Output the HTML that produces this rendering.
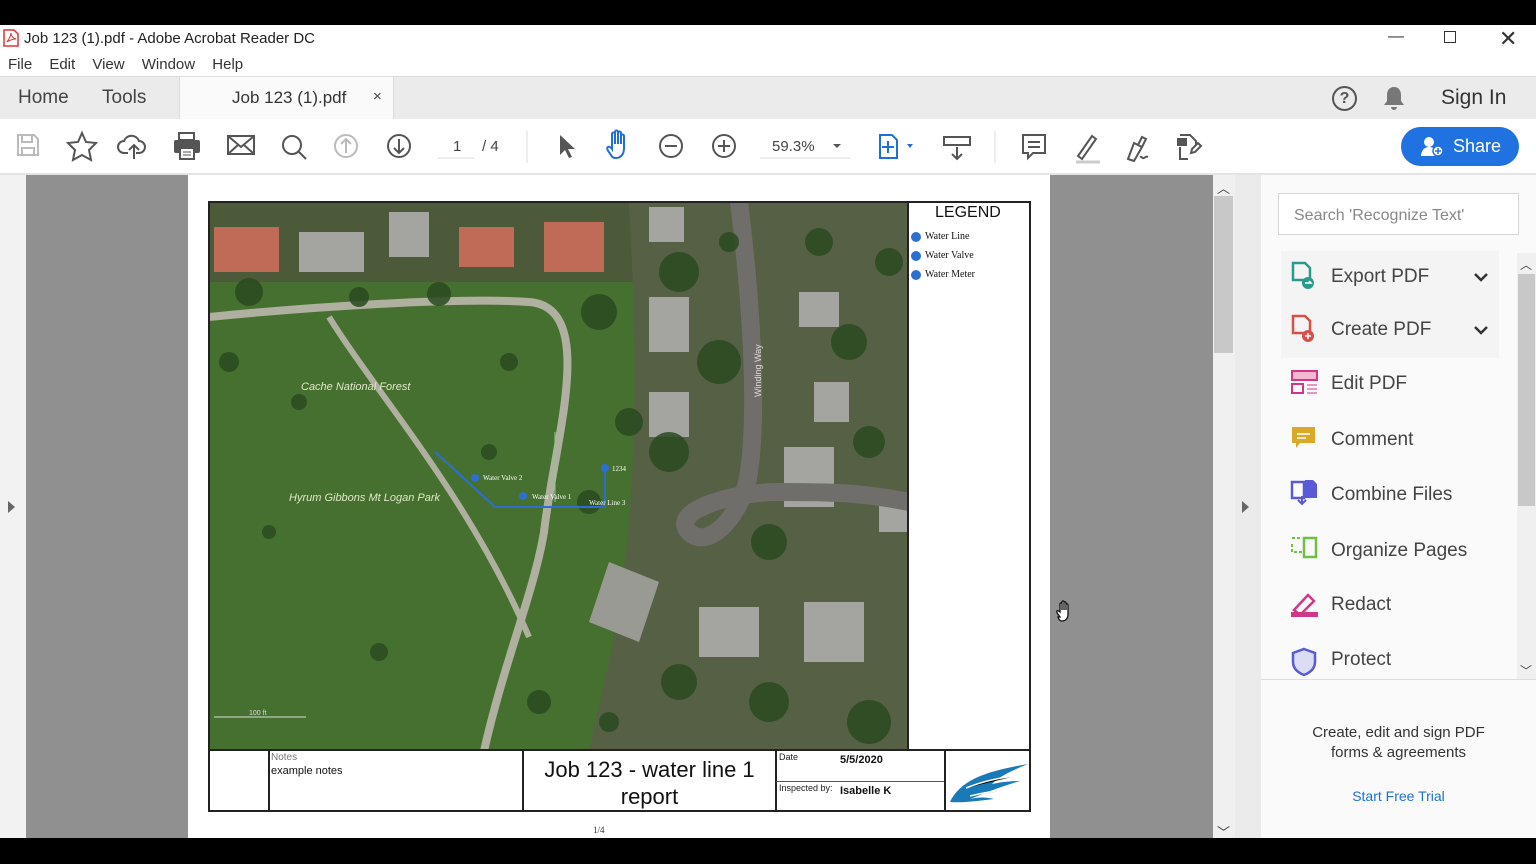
<!DOCTYPE html>
<html><head><meta charset="utf-8"><style>
*{margin:0;padding:0;box-sizing:border-box}
body{width:1536px;height:864px;overflow:hidden;background:#000;font-family:"Liberation Sans",sans-serif;position:relative;color:#333}
.a{position:absolute}
.rt{position:absolute;left:1331px;font-size:19px;color:#444}
</style></head><body>
<div class="a" style="left:0;top:25px;width:1536px;height:27px;background:#fff"></div>
<svg class="a" style="left:3px;top:29px" width="16" height="18"><path d="M1 1h10l4 4v12H1z" fill="#fff" stroke="#d33" stroke-width="1.5"/><path d="M4 13c2-3 4-7 4-9 0 3 2 5 5 6-3 0-6 1-9 3z" fill="none" stroke="#d33"/></svg>
<div class="a" style="left:24px;top:30px;font-size:15px;color:#222">Job 123 (1).pdf - Adobe Acrobat Reader DC</div>
<div class="a" style="left:1388px;top:28px;font-size:16px;color:#333">—</div>
<div class="a" style="left:1444px;top:31px;width:12px;height:12px;border:1.5px solid #333"></div>
<div class="a" style="left:1499px;top:26px;font-size:22px;color:#333">✕</div>
<div class="a" style="left:0;top:52px;width:1536px;height:24px;background:#fff"></div>
<div class="a" style="left:8px;top:56px;font-size:15px;color:#333;word-spacing:13px">File Edit View Window Help</div>
<div class="a" style="left:0;top:76px;width:1536px;height:43px;background:#ebebeb;border-top:1px solid #ddd"></div>
<div class="a" style="left:179px;top:77px;width:215px;height:43px;background:#fafafa;border-left:1px solid #ddd;border-right:1px solid #ddd"></div>
<div class="a" style="left:18px;top:87px;font-size:19px;color:#444">Home</div>
<div class="a" style="left:102px;top:87px;font-size:19px;color:#444">Tools</div>
<div class="a" style="left:232px;top:88px;font-size:17px;color:#333">Job 123 (1).pdf</div>
<div class="a" style="left:373px;top:88px;font-size:15px;color:#444">×</div>
<div class="a" style="left:1332px;top:86px;width:25px;height:25px;border:2px solid #555;border-radius:50%;text-align:center;font-size:16px;line-height:21px;font-weight:bold;color:#555">?</div>
<svg class="a" style="left:1383px;top:85px" width="22" height="26"><path d="M11 2c-5 0-7 4-7 8v6l-3 4h20l-3-4v-6c0-4-2-8-7-8z M8 22a3 3 0 006 0z" fill="#777"/></svg>
<div class="a" style="left:1441px;top:86px;font-size:21px;color:#333">Sign In</div>
<div class="a" style="left:0;top:119px;width:1536px;height:56px;background:#fff;border-bottom:2px solid #e4e4e4"></div>
<svg class="a" style="left:0;top:119px" width="1240" height="56" fill="none" stroke="#555" stroke-width="2">
<path d="M18 16h16l4 4v16H18z M22 16v7h10v-7 M22 36v-7h12v7" stroke="#bbb"/>
<path d="M82 14l4 9 10 1-7 7 2 10-9-5-9 5 2-10-7-7 10-1z"/>
<path d="M128 34h-4a6 6 0 010-12 8 8 0 0115 0 5 5 0 010 12h-3 M134 40V26 M129 31l5-5 5 5"/>
<rect x="179" y="14" width="15" height="7" stroke="#555"/>
<rect x="174" y="21" width="26" height="13" rx="2" fill="#555" stroke="none"/>
<rect x="180" y="29" width="14" height="11" fill="#fff" stroke="#555"/>
<path d="M183 33h8M183 36h8" stroke-width="1"/>
<path d="M228 17h26v18h-26z M228 17l13 11 13-11 M228 35l10-9 M254 35l-10-9"/>
<circle cx="292" cy="26" r="9"/><path d="M299 33l7 7"/>
<circle cx="346" cy="27" r="11" stroke="#bbb"/><path d="M346 34V20 M341 25l5-5 5 5" stroke="#bbb"/>
<circle cx="399" cy="27" r="11"/><path d="M399 20v14 M394 29l5 5 5-5"/>
<path d="M438 39h36" stroke="#ddd" stroke-width="1"/>
<path d="M527 12v32" stroke="#ddd" stroke-width="1"/>
<path d="M560 16l0 20 5-5 4 8 3-1-4-8 7 0z" fill="#555" stroke="none"/>
<path d="M611 36c-3-4-5-7-3-8 2-1 4 2 4 2V15c0-2 3-2 3 0v10V13c0-2 3-2 3 0v12V14c0-2 3-2 3 0v11V17c0-2 3-2 3 0v12c0 6-3 10-8 10-3 0-4-1-5-3z" stroke="#1f6fd8"/>
<circle cx="671" cy="27" r="11"/><path d="M665 27h12"/>
<circle cx="724" cy="27" r="11"/><path d="M718 27h12 M724 21v12"/>
<path d="M760 39h90" stroke="#ddd" stroke-width="1"/>
<path d="M833 25l4 4 4-4z" fill="#555" stroke="none"/>
<path d="M880 16h12l5 5v18h-17z" stroke="#1f6fd8"/><path d="M888 22v12 M882 28h12" stroke="#1f6fd8"/><path d="M907 25l3 4 3-4z" fill="#1f6fd8" stroke="none"/>
<path d="M944 18h26v8h-26z M957 28v12 M952 35l5 5 5-5"/>
<path d="M995 12v32" stroke="#ddd" stroke-width="1"/>
<path d="M1023 16h22v18h-12l-5 5v-5h-5z M1028 23h12 M1028 28h12"/>
<path d="M1078 37l14-20 4 3-14 20z" /><path d="M1076 43h24" stroke="#ccc" stroke-width="3"/>
<path d="M1128 40l6-16 8 4-8 14z M1138 26l4-8 4 2-4 8 M1140 38c2-1 2 2 4 1s2-2 4-1"/>
<path d="M1180 16h10l6 6v4 M1180 28v12h8 M1192 30l6-6 3 3-6 6-4 1z"/><path d="M1178 20h8v6h-8z" fill="#555"/>
</svg>
<div class="a" style="left:453px;top:138px;font-size:15px;color:#444">1</div>
<div class="a" style="left:482px;top:138px;font-size:15px;color:#444">/ 4</div>
<div class="a" style="left:772px;top:138px;font-size:15px;color:#444">59.3%</div>
<div class="a" style="left:1401px;top:127px;width:118px;height:39px;background:#1f72e0;border-radius:20px;color:#fff;font-size:18px;line-height:39px;padding-left:52px">Share</div>
<svg class="a" style="left:1420px;top:136px" width="26" height="22"><circle cx="9" cy="6" r="5" fill="#fff"/><path d="M1 20c0-6 4-9 8-9s6 2 7 4v5z" fill="#fff"/><circle cx="18" cy="15" r="5" fill="#fff" stroke="#1f72e0" stroke-width="1.5"/><path d="M18 12v6M15 15h6" stroke="#1f72e0" stroke-width="1.5"/></svg>
<div class="a" style="left:0;top:175px;width:26px;height:663px;background:#f2f2f2"></div>
<div class="a" style="left:8px;top:501px;width:0;height:0;border-left:7px solid #666;border-top:6px solid transparent;border-bottom:6px solid transparent"></div>
<div class="a" style="left:26px;top:175px;width:1187px;height:663px;background:#909090"></div>
<div class="a" style="left:1213px;top:175px;width:22px;height:663px;background:#f0f0f0"></div>
<div class="a" style="left:1214px;top:196px;width:19px;height:157px;background:#c8c8c8"></div>
<div class="a" style="left:1217px;top:178px;font-size:13px;color:#444">︿</div>
<div class="a" style="left:1217px;top:822px;font-size:13px;color:#444">﹀</div>
<div class="a" style="left:1235px;top:175px;width:26px;height:663px;background:#ebebeb"></div>
<div class="a" style="left:1242px;top:501px;width:0;height:0;border-left:7px solid #666;border-top:6px solid transparent;border-bottom:6px solid transparent"></div>
<div class="a" style="left:188px;top:175px;width:862px;height:663px;background:#fff"></div>
<svg class="a" style="left:209px;top:202px" width="699" height="549">
<rect width="699" height="549" fill="#46702f"/>
<rect x="0" y="0" width="699" height="80" fill="#4d5a3a"/>
<path d="M420 0h279v549H380c20-100 60-200 40-549z" fill="#556045"/>
<g fill="#c06a58"><rect x="5" y="25" width="65" height="45"/><rect x="250" y="25" width="55" height="40"/><rect x="335" y="20" width="60" height="50"/></g>
<g fill="#a4a4a0"><rect x="90" y="30" width="65" height="40"/><rect x="180" y="10" width="40" height="45"/><rect x="440" y="5" width="35" height="35"/><rect x="440" y="95" width="40" height="55"/><rect x="440" y="190" width="40" height="45"/><rect x="590" y="90" width="40" height="35"/><rect x="605" y="180" width="35" height="40"/><rect x="575" y="245" width="50" height="60"/><rect x="670" y="300" width="29" height="30"/><rect x="490" y="405" width="60" height="50"/><rect x="595" y="400" width="60" height="60"/></g>
<path d="M0 115c100-10 250-20 320-15s25 140 15 230c-10 60-40 130-60 219" stroke="#b0b0a0" stroke-width="8" fill="none"/>
<path d="M120 115c50 80 140 180 200 320" stroke="#b0b0a0" stroke-width="6" fill="none"/>
<path d="M530 0c10 80 20 200 10 270-5 40-40 80-60 60s40-40 90-40 80 0 130 10" stroke="#706e6a" stroke-width="18" fill="none"/>
<path d="M400 360l50 20-20 60-50-20z" fill="#9a9a94"/>
<g fill="#2a4a20" opacity=".85">
<circle cx="40" cy="90" r="14"/><circle cx="150" cy="95" r="10"/><circle cx="230" cy="92" r="12"/><circle cx="390" cy="110" r="18"/><circle cx="470" cy="70" r="20"/><circle cx="510" cy="160" r="22"/><circle cx="460" cy="250" r="20"/><circle cx="640" cy="140" r="18"/><circle cx="680" cy="60" r="14"/><circle cx="560" cy="340" r="18"/><circle cx="660" cy="240" r="16"/><circle cx="470" cy="480" r="18"/><circle cx="560" cy="500" r="20"/><circle cx="660" cy="520" r="22"/><circle cx="420" cy="220" r="14"/><circle cx="380" cy="300" r="12"/><circle cx="90" cy="200" r="8"/><circle cx="60" cy="330" r="7"/><circle cx="170" cy="450" r="9"/><circle cx="300" cy="160" r="9"/><circle cx="330" cy="500" r="12"/><circle cx="400" cy="520" r="10"/><circle cx="20" cy="160" r="10"/><circle cx="280" cy="250" r="8"/><circle cx="610" cy="40" r="14"/><circle cx="520" cy="40" r="10"/>
</g>
<path d="M226 250l60 55h110v-35" stroke="#2d6fd0" stroke-width="2" fill="none"/>
<path d="M346 230v70" stroke="#8c8" stroke-width="1"/>
<g fill="#2d6fd0"><circle cx="266" cy="276" r="4"/><circle cx="314" cy="294" r="4"/><circle cx="396" cy="266" r="4"/></g>
<g font-size="7" fill="#fff" font-family="Liberation Serif,serif"><text x="274" y="278">Water Valve 2</text><text x="323" y="297">Water Valve 1</text><text x="380" y="303">Water Line 3</text><text x="403" y="269">1234</text></g>
<g font-size="11" fill="#dfe8c8" font-style="italic"><text x="92" y="188">Cache National Forest</text><text x="80" y="299">Hyrum Gibbons Mt Logan Park</text></g>
<text x="0" y="0" transform="translate(552 195) rotate(-90)" font-size="9" fill="#ddd">Winding Way</text>
<path d="M5 515h92" stroke="#ddd"/><text x="40" y="513" font-size="7" fill="#ddd">100 ft</text>
</svg>
<div class="a" style="left:208px;top:201px;width:823px;height:611px;border:2px solid #222"></div>
<div class="a" style="left:907px;top:202px;width:2px;height:548px;background:#222"></div>
<div class="a" style="left:935px;top:204px;font-size:16px;color:#111">LEGEND</div>
<div class="a" style="left:911px;top:227px;font-size:10px;line-height:19px;font-family:'Liberation Serif',serif;color:#111">
<div><span style="display:inline-block;width:10px;height:10px;border-radius:50%;background:#2d6fd0;vertical-align:middle;margin-right:4px"></span>Water Line</div>
<div><span style="display:inline-block;width:10px;height:10px;border-radius:50%;background:#2d6fd0;vertical-align:middle;margin-right:4px"></span>Water Valve</div>
<div><span style="display:inline-block;width:10px;height:10px;border-radius:50%;background:#2d6fd0;vertical-align:middle;margin-right:4px"></span>Water Meter</div></div>
<div class="a" style="left:209px;top:749px;width:821px;height:2px;background:#222"></div>
<div class="a" style="left:268px;top:750px;width:2px;height:61px;background:#222"></div>
<div class="a" style="left:522px;top:750px;width:2px;height:61px;background:#222"></div>
<div class="a" style="left:775px;top:750px;width:2px;height:61px;background:#222"></div>
<div class="a" style="left:944px;top:750px;width:2px;height:61px;background:#222"></div>
<div class="a" style="left:776px;top:781px;width:168px;height:1px;background:#555"></div>
<div class="a" style="left:271px;top:752px;font-size:10px;color:#777">Notes</div>
<div class="a" style="left:271px;top:765px;font-size:11px;color:#111">example notes</div>
<div class="a" style="left:524px;top:756px;width:251px;text-align:center;font-size:22px;line-height:27px;color:#111">Job 123 - water line 1<br>report</div>
<div class="a" style="left:779px;top:752px;font-size:9px;color:#222">Date</div>
<div class="a" style="left:840px;top:754px;font-size:11px;font-weight:bold;color:#111">5/5/2020</div>
<div class="a" style="left:779px;top:783px;font-size:9px;color:#222">Inspected by:</div>
<div class="a" style="left:840px;top:785px;font-size:11px;font-weight:bold;color:#111">Isabelle K</div>
<svg class="a" style="left:948px;top:758px" width="82" height="48"><path d="M2 44c10-20 30-30 78-38-20 8-30 14-36 20 10-2 20-3 28-3-20 6-35 12-50 18 8-2 16-2 24 0-18 2-30 4-44 3z" fill="#1a7ab8"/><path d="M18 30c15-6 30-10 50-12M22 38c12-3 24-5 36-6" stroke="#fff" stroke-width="1.5"/></svg>
<div class="a" style="left:593px;top:825px;font-size:9px;font-family:'Liberation Serif',serif;color:#333">1/4</div>
<svg class="a" style="left:1055px;top:600px" width="20" height="22"><path d="M5 17c-2-3-4-5-3-6 1-1 3 1 3 1V4c0-1.5 2-1.5 2 0v6V2c0-1.5 2-1.5 2 0v8V3c0-1.5 2-1.5 2 0v7V5c0-1.5 2-1.5 2 0v9c0 4-2 7-6 7-2 0-3-1-4-4z" fill="#fff" stroke="#111" stroke-width="1.3"/></svg>
<div class="a" style="left:1261px;top:175px;width:275px;height:663px;background:#fafafa"></div>
<div class="a" style="left:1278px;top:193px;width:241px;height:42px;border:1px solid #d6d6d6;background:#fff;font-size:16px;color:#888;padding:13px 0 0 15px">Search 'Recognize Text'</div>
<div class="a" style="left:1281px;top:251px;width:218px;height:107px;background:#f4f4f4"></div>
<div class="a" style="left:1517px;top:253px;width:19px;height:426px;background:#f0f0f0"></div>
<div class="a" style="left:1518px;top:274px;width:17px;height:232px;background:#c8c8c8"></div>
<div class="a" style="left:1520px;top:256px;font-size:12px;color:#444">︿</div>
<div class="a" style="left:1520px;top:662px;font-size:12px;color:#444">﹀</div>
<div class="a" style="left:1261px;top:679px;width:275px;height:1px;background:#ddd"></div>
<svg class="a" style="left:1288px;top:260px" width="32" height="420">
<path d="M5 3h12l5 5v12H5z" fill="none" stroke="#2a9a8a" stroke-width="2.5"/><circle cx="20" cy="23" r="6" fill="#2a9a8a"/><path d="M17 23h6l-2-2" stroke="#fff" stroke-width="1.5" fill="none"/>
<path d="M5 56h12l5 5v12H5z" fill="none" stroke="#d9504a" stroke-width="2.5"/><circle cx="20" cy="76" r="6" fill="#d9504a"/><path d="M17 76h6M20 73v6" stroke="#fff" stroke-width="1.5"/>
<rect x="4" y="111" width="25" height="9" fill="#f5b8d0" stroke="#d0368a" stroke-width="2"/><rect x="4" y="124" width="11" height="9" fill="none" stroke="#d0368a" stroke-width="2"/><path d="M19 125h10M19 129h10M19 133h10" stroke="#d0368a"/>
<path d="M4 167h23v16H12l-4 5v-5H4z" fill="#d9a92a"/><path d="M9 174h13M9 178h9" stroke="#fff" stroke-width="1.5"/>
<path d="M4 222h12v16H4z" fill="none" stroke="#5a5ad8" stroke-width="2.5"/><path d="M17 220h8l4 4v14H17z" fill="#5a5ad8"/><path d="M14 236v8M10 240l4 4 4-4" stroke="#5a5ad8" stroke-width="2" fill="none"/>
<path d="M4 278h8M4 284v8h10" stroke="#6fbf40" stroke-width="2" stroke-dasharray="3 2" fill="none"/><rect x="16" y="278" width="12" height="19" fill="none" stroke="#6fbf40" stroke-width="2.5"/>
<path d="M6 350l14-15 6 6-14 14z" fill="none" stroke="#d0368a" stroke-width="2.5"/><rect x="3" y="352" width="27" height="5" fill="#d0368a"/>
<path d="M16 389l11 4v9c0 7-6 11-11 13-5-2-11-6-11-13v-9z" fill="#dcdcf5" stroke="#5a5ad8" stroke-width="2.5"/>
</svg>
<div class="rt" style="top:266px">Export PDF</div>
<div class="rt" style="top:319px">Create PDF</div>
<div class="rt" style="top:373px">Edit PDF</div>
<div class="rt" style="top:429px">Comment</div>
<div class="rt" style="top:484px">Combine Files</div>
<div class="rt" style="top:540px">Organize Pages</div>
<div class="rt" style="top:594px">Redact</div>
<div class="rt" style="top:649px">Protect</div>
<svg class="a" style="left:1472px;top:270px" width="18" height="70" fill="none" stroke="#333" stroke-width="2.5"><path d="M3 4l6 6 6-6M3 57l6 6 6-6"/></svg>
<div class="a" style="left:1261px;top:723px;width:275px;text-align:center;font-size:15px;line-height:20px;color:#333">Create, edit and sign PDF<br>forms &amp; agreements</div>
<div class="a" style="left:1261px;top:788px;width:275px;text-align:center;font-size:14px;color:#1f6fd8">Start Free Trial</div>
</body></html>
